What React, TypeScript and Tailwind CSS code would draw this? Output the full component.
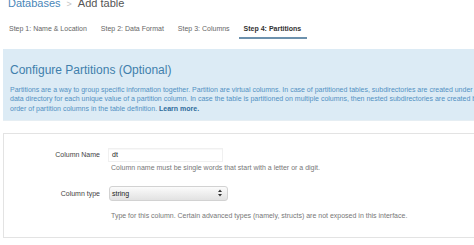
import React from "react";

export default function App() {
  const font = { fontFamily: '"Liberation Sans", Arial, sans-serif' };
  return (
    <div className="w-[474px] h-[245px] overflow-hidden bg-white" style={font}>
      <div className="w-[700px]">
        {/* breadcrumb */}
        <div className="-mt-[3px] h-[14px] pl-[8px] flex items-baseline text-[11px] leading-[13px]">
          <span className="text-[#4a86b8]">Databases</span>
          <span className="mx-[6px] text-[#c4c4c4] text-[9px]">&gt;</span>
          <span className="text-[#555]">Add table</span>
        </div>

        {/* tabs */}
        <div className="mt-[9px] pl-[4px] flex gap-[4px] text-[7px] leading-[9px]">
          <div className="px-[5px] pt-[4px] pb-[4px] border-b-2 border-transparent text-[#666]">Step 1: Name &amp; Location</div>
          <div className="px-[5px] pt-[4px] pb-[4px] border-b-2 border-transparent text-[#666]">Step 2: Data Format</div>
          <div className="px-[5px] pt-[4px] pb-[4px] border-b-2 border-transparent text-[#666]">Step 3: Columns</div>
          <div className="pl-[5px] pr-[6px] pt-[4px] pb-[4px] border-b-2 border-[#6c91ad] text-[#333] font-bold">Step 4: Partitions</div>
        </div>

        {/* info panel */}
        <div className="mt-[10px] ml-[3px] bg-[#dcebf5] border-b border-[#e6eef3] pt-[14px] pb-[7px] pl-[7px]">
          <div className="text-[12px] leading-[14px] text-[#3f7fac]">Configure Partitions (Optional)</div>
          <div className="mt-[8px] text-[7px] leading-[9.3px] text-[#5291c3] whitespace-nowrap">
            <div>Partitions are a way to group specific information together. Partition are virtual columns. In case of partitioned tables, subdirectories are created under the table's</div>
            <div>data directory for each unique value of a partition column. In case the table is partitioned on multiple columns, then nested subdirectories are created based on the</div>
            <div>
              order of partition columns in the table definition. <span className="font-bold text-[#2f6b9c]">Learn more.</span>
            </div>
          </div>
        </div>

        {/* form */}
        <div className="mt-[12px] ml-[3px] border border-[#e3e3e3] pt-[14px] pb-[17px] text-[7px] leading-[9px]">
          <div className="flex items-center">
            <div className="w-[96px] text-right text-[#444]">Column Name</div>
            <div className="ml-[8px] w-[115px] h-[14px] border border-[#f0f0f0] shadow-[inset_0_1px_1px_rgba(0,0,0,0.03)] pl-[3px] flex items-center text-[#222]">
              dt
            </div>
          </div>
          <div className="mt-[1px] flex">
            <div className="w-[96px]" />
            <div className="ml-[9px] pl-[2px] text-[#777] whitespace-nowrap">Column name must be single words that start with a letter or a digit.</div>
          </div>

          <div className="mt-[14px] flex items-center">
            <div className="w-[96px] text-right text-[#444]">Column type</div>
            <div className="ml-[9px] w-[119px] h-[15px] rounded-[3px] border border-[#d2d2d2] bg-gradient-to-b from-[#fbfbfb] to-[#e2e2e2] pl-[2px] pr-[5px] flex items-center justify-between text-[#222]">
              <span>string</span>
              <svg width="4" height="8" viewBox="0 0 4 8">
                <path d="M0 3 L2 0.5 L4 3 Z" fill="#333" />
                <path d="M0 5 L2 7.5 L4 5 Z" fill="#333" />
              </svg>
            </div>
          </div>
          <div className="mt-[10px] flex">
            <div className="w-[96px]" />
            <div className="ml-[9px] pl-[2px] text-[#777] whitespace-nowrap">Type for this column. Certain advanced types (namely, structs) are not exposed in this interface.</div>
          </div>
        </div>
      </div>
    </div>
  );
}
